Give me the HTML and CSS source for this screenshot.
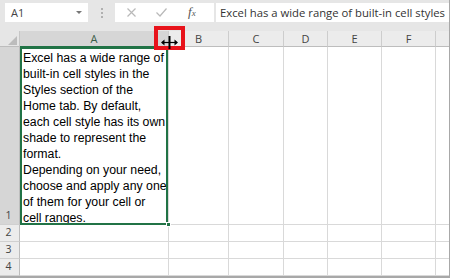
FILE: index.html
```html
<!DOCTYPE html>
<html>
<head>
<meta charset="utf-8">
<link rel="stylesheet" href="styles.css">
</head>
<body>
<div class="app">
  <div class="toolbar">
    <div class="namebox"><span>A1</span><span class="caret"></span></div>
    <div class="dots"><i></i><i></i><i></i></div>
    <div class="fnbox">
      <svg class="ico" width="9" height="9" viewBox="0 0 9 9"><path d="M0.5 0.5 L8.5 8.5 M8.5 0.5 L0.5 8.5" stroke="#b9b9b9" stroke-width="1.2" fill="none"/></svg>
      <svg class="ico" width="11" height="9" viewBox="0 0 11 9"><path d="M0.5 4.5 L4 8 L10.5 0.5" stroke="#b9b9b9" stroke-width="1.2" fill="none"/></svg>
      <span class="fx">f<span class="fxs">x</span></span>
    </div>
    <div class="formula">Excel has a wide range of built-in cell styles</div>
  </div>
  <div class="sheet">
    <div class="corner"><svg width="20" height="16" viewBox="0 0 20 16"><polygon points="17,5 17,14 8,14" fill="#bcbcbc"/></svg></div>
    <div class="ch sel">A</div>
    <div class="ch">B</div>
    <div class="ch">C</div>
    <div class="ch">D</div>
    <div class="ch">E</div>
    <div class="ch">F</div>
    <div class="ch"></div>

    <div class="rh sel">1</div>
    <div class="cell a1">Excel has a wide range of<br>built-in cell styles in the<br>Styles section of the<br>Home tab. By default,<br>each cell style has its own<br>shade to represent the<br>format.<br>Depending on your need,<br>choose and apply any one<br>of them for your cell or<br>cell ranges.<span class="handle"></span></div>
    <div class="cell"></div><div class="cell"></div><div class="cell"></div><div class="cell"></div><div class="cell"></div><div class="cell"></div>

    <div class="rh">2</div>
    <div class="cell"></div><div class="cell"></div><div class="cell"></div><div class="cell"></div><div class="cell"></div><div class="cell"></div><div class="cell"></div>
    <div class="rh">3</div>
    <div class="cell"></div><div class="cell"></div><div class="cell"></div><div class="cell"></div><div class="cell"></div><div class="cell"></div><div class="cell"></div>
    <div class="rh">4</div>
    <div class="cell"></div><div class="cell"></div><div class="cell"></div><div class="cell"></div><div class="cell"></div><div class="cell"></div><div class="cell"></div>
  </div>
  <div class="marker">
    <svg class="cursor" width="17" height="13" viewBox="0 0 17 13"><path d="M8.5 0 V13" stroke="#000" stroke-width="2"/><path d="M1 6.5 H16" stroke="#000" stroke-width="1.2"/><path d="M0 6.5 L3.5 3.5 V9.5 Z M17 6.5 L13.5 3.5 V9.5 Z" fill="#000"/></svg>
  </div>
</div>
</body>
</html>
```

FILE: styles.css
```css
* { box-sizing: border-box; margin: 0; padding: 0; }
body { width: 450px; height: 278px; overflow: hidden; background: #fff; font-family: "Liberation Sans", Arial, sans-serif; }
.app { position: relative; width: 450px; height: 278px; border-right: 1px solid #a8a8a8; border-bottom: 2px solid #a8a8a8; background: #fff; display: flex; flex-direction: column; overflow: hidden; }
.toolbar { height: 31px; flex: none; background: #e6e6e6; display: flex; align-items: flex-start; padding: 3px 0 0 5px; }
.namebox { width: 83px; height: 19px; background: #fff; display: flex; align-items: center; justify-content: space-between; padding: 0 6px 0 6px; font-family: "Open Sans", sans-serif; font-size: 11px; color: #444; }
.caret { width: 0; height: 0; border-left: 3px solid transparent; border-right: 3px solid transparent; border-top: 3px solid #777; }
.dots { width: 27px; height: 19px; display: flex; flex-direction: column; align-items: center; justify-content: center; gap: 2px; }
.dots i { display: block; width: 2px; height: 2px; background: #b0b0b0; }
.fnbox { width: 99px; height: 19px; background: #fff; display: flex; align-items: center; padding-left: 12px; }
.fnbox .ico:nth-child(2) { margin-left: 20px; }
.fx { margin-left: 21px; font-family: "Liberation Serif", serif; font-style: italic; font-size: 13px; color: #555; line-height: 19px; }
.fxs { font-size: 9px; }
.formula { flex: 1; margin-left: 2px; height: 19px; background: #fff; font-family: "Open Sans", sans-serif; font-size: 11.3px; color: #333; padding-left: 4px; line-height: 19px; white-space: nowrap; overflow: hidden; }
.sheet { display: grid; grid-template-columns: 20px 149px 60px 55px 44px 54px 54px 14px; grid-template-rows: 16px 178px 17px 17px 17px; }
.corner { background: #e6e6e6; border-right: 1px solid #c6c6c6; border-bottom: 1px solid #bdbdbd; }
.corner svg { display: block; }
.ch { background: #ececec; border-right: 1px solid #cdcdcd; border-bottom: 1px solid #bdbdbd; font-family: "Open Sans", sans-serif; font-size: 11px; color: #444; display: flex; align-items: center; justify-content: center; line-height: 1; }
.ch.sel { background: #d6d6d6; color: #3b5e4a; border-bottom: 1px solid #217346; }
.rh { background: #ececec; border-right: 1px solid #bdbdbd; border-bottom: 1px solid #d0d0d0; font-family: "Open Sans", sans-serif; font-size: 10.5px; color: #444; display: flex; align-items: flex-end; justify-content: center; padding: 0 2px 1px 0; line-height: 15px; }
.rh.sel { background: #d6d6d6; }
.cell { border-right: 1px solid #d9d9d9; border-bottom: 1px solid #d9d9d9; }
.a1 { position: relative; padding: 3px 0 0 3px; font-size: 12.3px; line-height: 16px; color: #000; white-space: nowrap; }
.a1::after { content: ""; position: absolute; left: 0; top: 0; right: 0; bottom: -1px; border: 2px solid #217346; }
.handle { position: absolute; right: -3px; bottom: -3px; width: 5px; height: 5px; background: #217346; border: 1px solid #fff; z-index: 2; }
.marker { position: absolute; left: 154px; top: 26px; width: 31px; height: 24px; border: 4px solid #e8131b; }
.cursor { position: absolute; left: 3px; top: 6px; }
```
